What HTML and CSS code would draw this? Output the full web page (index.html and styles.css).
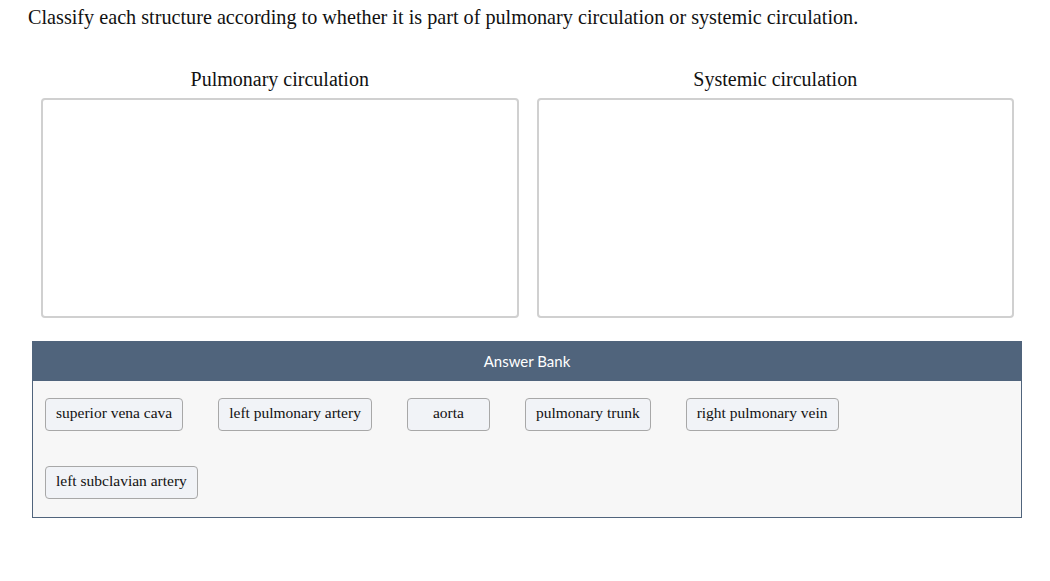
FILE: index.html
```html
<!DOCTYPE html>
<html>
<head>
<meta charset="utf-8">
<link rel="stylesheet" href="styles.css">
</head>
<body>
<div class="page">
  <p class="question">Classify each structure according to whether it is part of pulmonary circulation or systemic circulation.</p>
  <div class="bins">
    <div class="bin">
      <div class="bin-title">Pulmonary circulation</div>
      <div class="bin-box"></div>
    </div>
    <div class="bin">
      <div class="bin-title">Systemic circulation</div>
      <div class="bin-box"></div>
    </div>
  </div>
  <div class="bank">
    <div class="bank-head">Answer Bank</div>
    <div class="bank-body">
      <div class="chip">superior vena cava</div>
      <div class="chip">left pulmonary artery</div>
      <div class="chip chip-min">aorta</div>
      <div class="chip">pulmonary trunk</div>
      <div class="chip">right pulmonary vein</div>
      <div class="chip">left subclavian artery</div>
    </div>
  </div>
</div>
</body>
</html>
```
FILE: styles.css
```css
html, body {
  margin: 0;
  padding: 0;
  background: #fff;
}
.page {
  padding: 5px 28px 0 32px;
  font-family: "Liberation Serif", "Times New Roman", serif;
  color: #111;
  width: 990px;
}
.question {
  margin: 0 0 0 -4px;
  font-size: 20.2px;
  line-height: 24px;
}
.bins {
  display: flex;
  gap: 18px;
  margin: 39px 8px 0 9px;
}
.bin {
  flex: 1;
  display: flex;
  flex-direction: column;
}
.bin-title {
  text-align: center;
  font-size: 20px;
  line-height: 22px;
  margin-bottom: 8px;
}
.bin-box {
  height: 216px;
  border: 2px solid #d0d0d0;
  border-radius: 4px;
  background: #fff;
}
.bank {
  margin-top: 23px;
  border: 1px solid #50647c;
  background: #f7f7f7;
}
.bank-head {
  background: #50647c;
  color: #fff;
  font-family: Lato, "Liberation Sans", sans-serif;
  font-size: 15px;
  height: 39px;
  line-height: 39px;
  text-align: center;
}
.bank-body {
  display: flex;
  flex-wrap: wrap;
  column-gap: 35px;
  row-gap: 35px;
  padding: 17px 12px 18px 12px;
}
.chip {
  box-sizing: border-box;
  height: 33px;
  line-height: 28px;
  padding: 0 10px;
  font-size: 15.5px;
  border: 1px solid #a8a8a8;
  border-radius: 4px;
  background: #f1f3f7;
  color: #111;
  text-align: center;
}
.chip-min {
  min-width: 83px;
}
```
